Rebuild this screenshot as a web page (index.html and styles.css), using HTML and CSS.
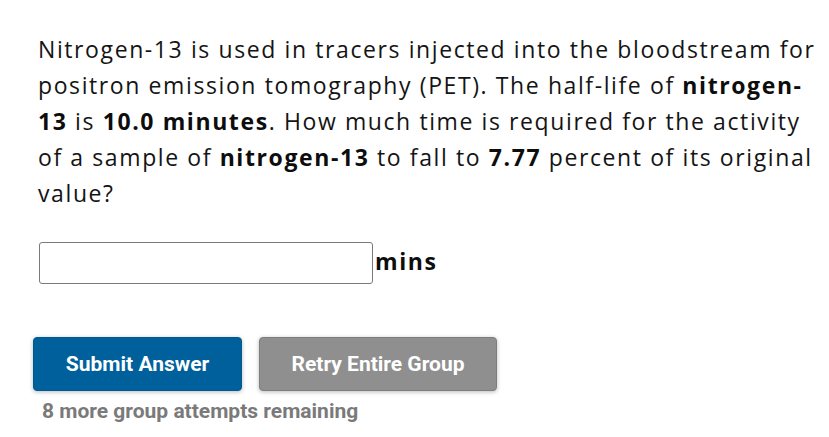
FILE: index.html
```html
<!DOCTYPE html>
<html>
<head>
<meta charset="utf-8">
<link rel="stylesheet" href="styles.css">
</head>
<body>
<div class="question">
  <p class="prompt">Nitrogen-13 is used in tracers injected into the bloodstream for positron emission tomography (PET). The half-life of <b>nitrogen-13</b> is <b>10.0 minutes</b>. How much time is required for the activity of a sample of <b>nitrogen-13</b> to fall to <b>7.77</b> percent of its original value?</p>
  <div class="answer-row">
    <input class="answer" type="text">
    <span class="unit">mins</span>
  </div>
  <div class="actions">
    <button class="btn btn-primary">Submit Answer</button>
    <button class="btn btn-secondary">Retry Entire Group</button>
  </div>
  <div class="attempts">8 more group attempts remaining</div>
</div>
</body>
</html>
```

FILE: styles.css
```css
html, body {
  margin: 0;
  padding: 0;
  background: #ffffff;
}
.question {
  padding: 31px 10px 0 38px;
  font-family: "Open Sans", "DejaVu Sans", sans-serif;
  color: #141414;
}
.prompt {
  margin: 0;
  font-size: 23px;
  line-height: 36px;
  letter-spacing: 1.6px;
  width: 781px;
}
.prompt b {
  font-weight: 700;
  color: #0d0d0d;
}
.answer-row {
  display: flex;
  align-items: center;
  margin-top: 31px;
  height: 42px;
}
.answer {
  box-sizing: border-box;
  width: 334px;
  height: 42px;
  margin: 0 0 0 1px;
  border: 1px solid #7a7a7a;
  border-radius: 3px;
  background: #fff;
  font-size: 20px;
  padding: 0 8px;
}
.unit {
  font-size: 23px;
  font-weight: 700;
  letter-spacing: 1.6px;
  color: #0d0d0d;
  margin-left: 2px;
  position: relative;
  top: -2px;
}
.actions {
  display: flex;
  gap: 17px;
  margin-top: 53px;
  margin-left: -5px;
}
.btn {
  box-sizing: border-box;
  height: 54px;
  border-radius: 4px;
  font-family: Roboto, "Liberation Sans", sans-serif;
  font-weight: 700;
  font-size: 21px;
  color: #ffffff;
  box-shadow: 0 1px 4px rgba(0, 0, 0, 0.28);
  padding: 0;
}
.btn-primary {
  width: 209px;
  background: #00609b;
  border: 1px solid #005a91;
}
.btn-secondary {
  width: 238px;
  background: #8f8f8f;
  border: 1px solid #7e7e7e;
}
.attempts {
  margin-top: 8px;
  margin-left: 4px;
  font-family: Roboto, "Liberation Sans", sans-serif;
  font-weight: 700;
  font-size: 21px;
  color: #7a7a7a;
}
```
